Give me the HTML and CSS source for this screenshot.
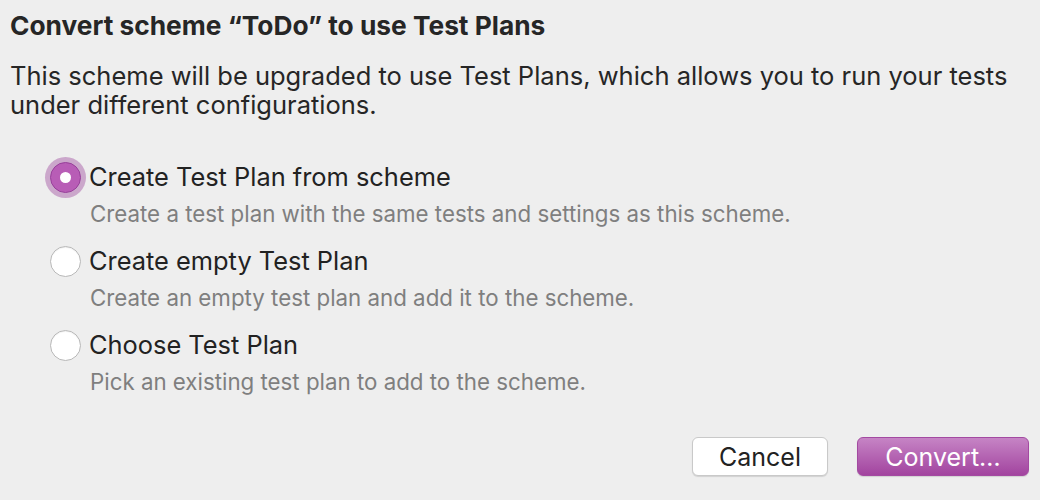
FILE: index.html
```html
<!DOCTYPE html>
<html>
<head>
<meta charset="utf-8">
<link rel="stylesheet" href="styles.css">
</head>
<body>
<div class="dialog">
  <h1 class="title">Convert scheme “ToDo” to use Test Plans</h1>
  <p class="intro">This scheme will be upgraded to use Test Plans, which allows you to run your tests under different configurations.</p>
  <div class="options">
    <div class="option">
      <div class="row">
        <span class="radio checked"><span class="dot"></span></span>
        <span class="label">Create Test Plan from scheme</span>
      </div>
      <div class="desc">Create a test plan with the same tests and settings as this scheme.</div>
    </div>
    <div class="option">
      <div class="row">
        <span class="radio"></span>
        <span class="label">Create empty Test Plan</span>
      </div>
      <div class="desc">Create an empty test plan and add it to the scheme.</div>
    </div>
    <div class="option">
      <div class="row">
        <span class="radio"></span>
        <span class="label">Choose Test Plan</span>
      </div>
      <div class="desc">Pick an existing test plan to add to the scheme.</div>
    </div>
  </div>
  <div class="buttons">
    <button class="btn cancel">Cancel</button>
    <button class="btn primary">Convert…</button>
  </div>
</div>
</body>
</html>
```
FILE: styles.css
```css
html, body {
  margin: 0;
  padding: 0;
  background: #eeeeee;
}
body {
  width: 1040px;
  height: 500px;
  overflow: hidden;
  font-family: Inter, "Noto Sans", sans-serif;
  color: #262626;
}
.dialog {
  padding: 11px 11px 0 10px;
}
.title {
  margin: 0;
  font-size: 26.3px;
  font-weight: 700;
  line-height: 30px;
}
.intro {
  margin: 20px 0 0 0;
  font-size: 25.5px;
  line-height: 29px;
  width: 1015px;
}
.options {
  margin-top: 41px;
  padding-left: 40px;
  display: flex;
  flex-direction: column;
  gap: 17px;
}
.row {
  display: flex;
  align-items: center;
  gap: 8px;
  height: 34px;
}
.radio {
  width: 31px;
  height: 31px;
  box-sizing: border-box;
  border-radius: 50%;
  background: #ffffff;
  border: 1px solid #b8b8b8;
  box-shadow: inset 0 1px 1px rgba(0,0,0,0.06);
  display: flex;
  align-items: center;
  justify-content: center;
  flex: none;
}
.radio.checked {
  background: #b85db6;
  border: 1px solid #97409a;
  box-shadow: 0 0 0 5px rgba(175, 110, 175, 0.55);
}
.dot {
  width: 11px;
  height: 11px;
  border-radius: 50%;
  background: #ffffff;
}
.label {
  font-size: 25.4px;
  line-height: 34px;
  color: #222222;
}
.desc {
  margin-top: 7px;
  padding-left: 40px;
  font-size: 22.3px;
  line-height: 26px;
  color: #7f7f7f;
}
.buttons {
  display: flex;
  justify-content: flex-end;
  gap: 29px;
  margin-top: 42px;
}
.btn {
  height: 39px;
  border-radius: 6px;
  font-family: Inter, "Noto Sans", sans-serif;
  font-size: 25px;
  padding: 0;
}
.cancel {
  width: 136px;
  background: #ffffff;
  color: #222222;
  border: 1px solid #c9c9c9;
  box-shadow: 0 1px 1px rgba(0,0,0,0.12);
}
.primary {
  width: 172px;
  color: #ffffff;
  border: 1px solid #a34aa1;
  background: linear-gradient(#c684c5, #a2449f);
  box-shadow: 0 1px 1px rgba(0,0,0,0.12);
}
```
